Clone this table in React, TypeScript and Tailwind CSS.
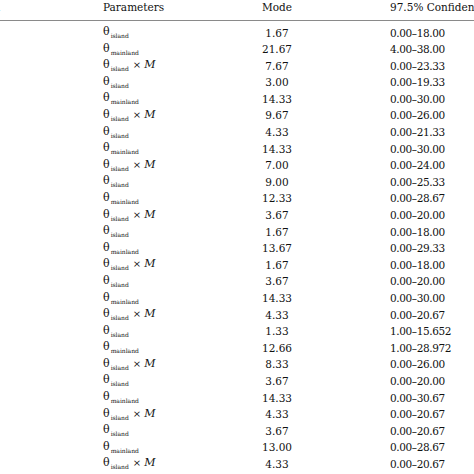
type Kind = "island" | "mainland" | "islandM";

const rows: [Kind, string, string][] = [
  ["island", "1.67", "0.00–18.00"],
  ["mainland", "21.67", "4.00–38.00"],
  ["islandM", "7.67", "0.00–23.33"],
  ["island", "3.00", "0.00–19.33"],
  ["mainland", "14.33", "0.00–30.00"],
  ["islandM", "9.67", "0.00–26.00"],
  ["island", "4.33", "0.00–21.33"],
  ["mainland", "14.33", "0.00–30.00"],
  ["islandM", "7.00", "0.00–24.00"],
  ["island", "9.00", "0.00–25.33"],
  ["mainland", "12.33", "0.00–28.67"],
  ["islandM", "3.67", "0.00–20.00"],
  ["island", "1.67", "0.00–18.00"],
  ["mainland", "13.67", "0.00–29.33"],
  ["islandM", "1.67", "0.00–18.00"],
  ["island", "3.67", "0.00–20.00"],
  ["mainland", "14.33", "0.00–30.00"],
  ["islandM", "4.33", "0.00–20.67"],
  ["island", "1.33", "1.00–15.652"],
  ["mainland", "12.66", "1.00–28.972"],
  ["islandM", "8.33", "0.00–26.00"],
  ["island", "3.67", "0.00–20.00"],
  ["mainland", "14.33", "0.00–30.67"],
  ["islandM", "4.33", "0.00–20.67"],
  ["island", "3.67", "0.00–20.67"],
  ["mainland", "13.00", "0.00–28.67"],
  ["islandM", "4.33", "0.00–20.67"],
];

function Param({ kind }: { kind: Kind }) {
  const sub = kind === "mainland" ? "mainland" : "island";
  return (
    <span className="flex items-baseline whitespace-nowrap">
      <span className="text-[11px]">θ</span>
      <span className="relative top-[3px] ml-[1px] text-[6px]">{sub}</span>
      {kind === "islandM" && (
        <>
          <span className="ml-[4px] text-[10px]">×</span>
          <span className="ml-[3px] text-[11px] italic">M</span>
        </>
      )}
    </span>
  );
}

export default function App() {
  return (
    <div className="h-[474px] w-[474px] overflow-hidden bg-white text-[10.5px] text-[#111] [font-family:'DejaVu_Serif',serif]">
      <div className="flex h-[21px] items-start border-b border-[#8a8a8a] pt-[1px] leading-[12px] whitespace-nowrap">
        <div className="-ml-[6px] w-[109px] shrink-0">a</div>
        <div className="w-[144px] shrink-0">Parameters</div>
        <div className="w-[60px] shrink-0 text-center">Mode</div>
        <div className="ml-[83px] shrink-0">97.5% Confidence interval</div>
      </div>
      <div className="pt-[3.5px]">
        {rows.map(([kind, mode, ci], i) => (
          <div key={i} className="flex h-[16.6px] items-center leading-[16.6px] whitespace-nowrap">
            <div className="ml-[103px] w-[144px] shrink-0">
              <Param kind={kind} />
            </div>
            <div className="w-[60px] shrink-0 text-center">{mode}</div>
            <div className="ml-[83px] shrink-0 tracking-[-0.4px]">{ci}</div>
          </div>
        ))}
      </div>
    </div>
  );
}
